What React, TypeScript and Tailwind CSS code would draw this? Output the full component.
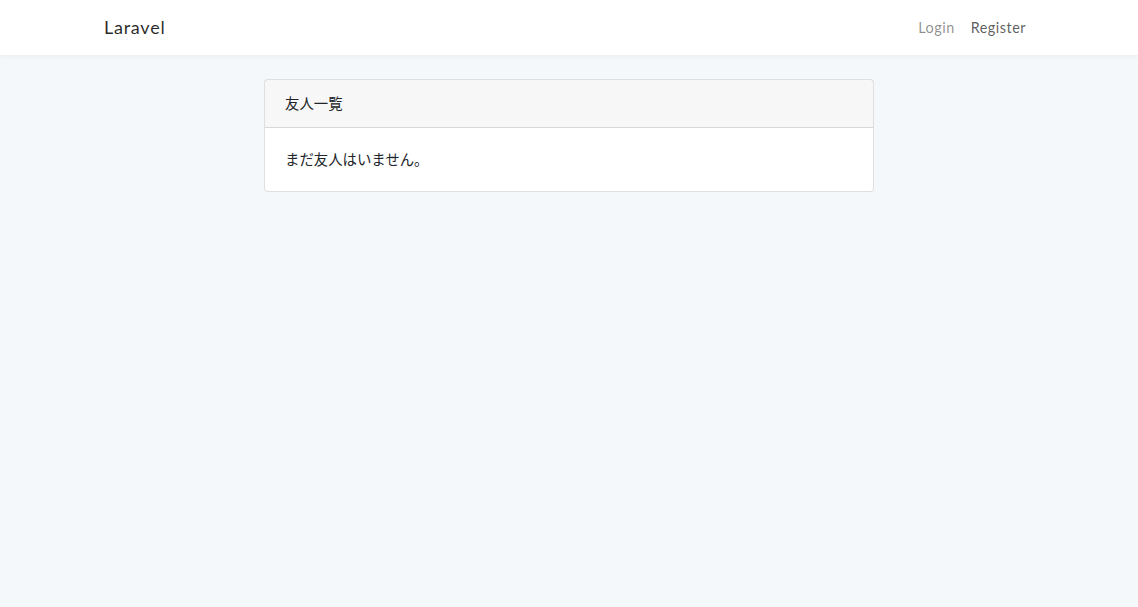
export default function App() {
  const font = { fontFamily: '"Lato", "Noto Sans CJK JP", sans-serif' };
  return (
    <div className="min-h-[607px] bg-[#f5f8fa] text-[#212529] text-[14.4px] leading-[1.6]" style={font}>
      <nav className="h-[55px] bg-white shadow-[0_2px_4px_rgba(0,0,0,0.04)]">
        <div className="mx-auto flex h-full w-[960px] items-center justify-between px-[15px]">
          <a className="text-[18px] tracking-[0.75px] text-[rgba(0,0,0,0.85)]">Laravel</a>
          <div className="flex">
            <a className="px-2 tracking-[0.5px] text-[rgba(0,0,0,0.45)]">Login</a>
            <a className="px-2 tracking-[0.5px] text-[rgba(0,0,0,0.65)]">Register</a>
          </div>
        </div>
      </nav>
      <main className="py-6">
        <div className="mx-auto w-[960px] px-[15px]">
          <div className="ml-[160px] w-[610px] rounded border border-[rgba(0,0,0,0.125)] bg-white">
            <div className="border-b border-[rgba(0,0,0,0.125)] bg-[rgba(0,0,0,0.03)] px-5 py-3">友人一覧</div>
            <div className="p-5">まだ友人はいません。</div>
          </div>
        </div>
      </main>
    </div>
  );
}
